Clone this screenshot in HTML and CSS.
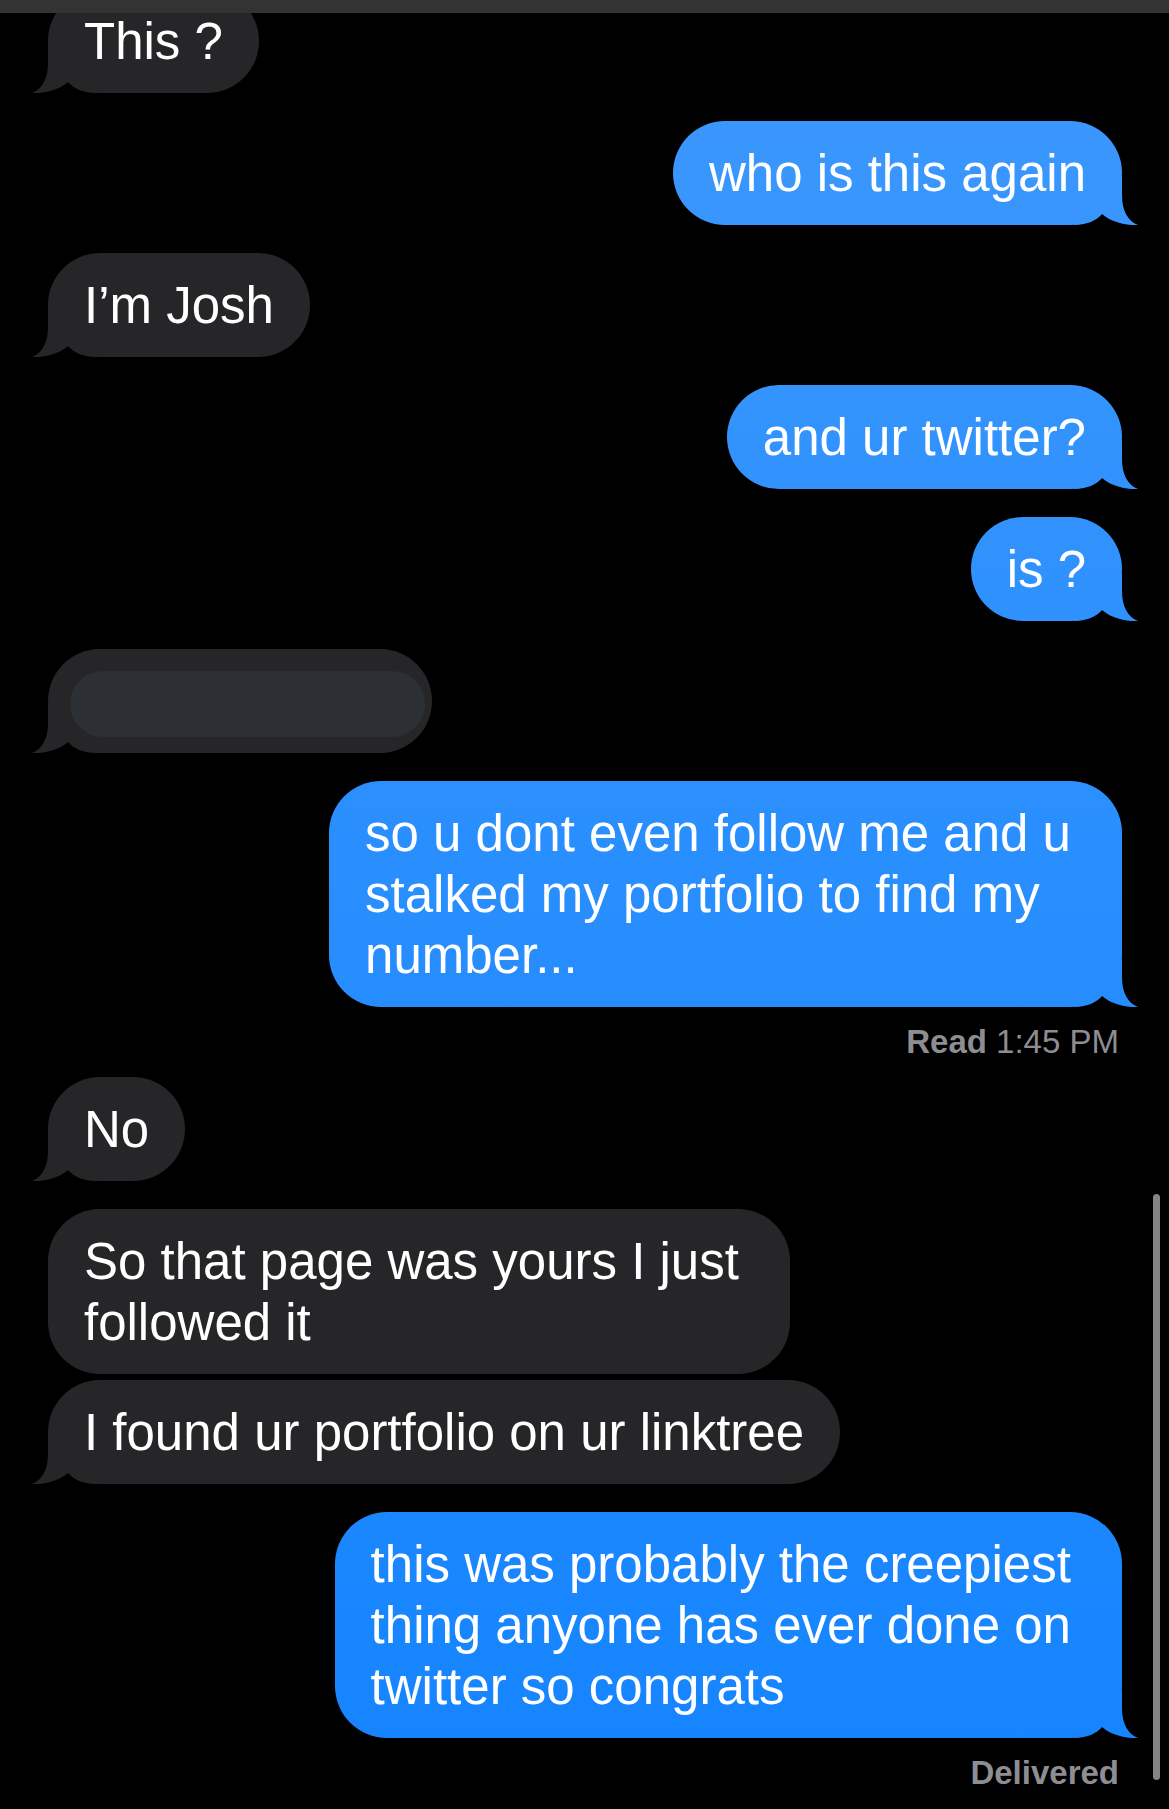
FILE: index.html
```html
<!DOCTYPE html>
<html lang="en">
<head>
    <meta charset="UTF-8">
    <meta name="viewport" content="width=device-width, initial-scale=1.0">
    <title>Messages</title>
    <link rel="stylesheet" href="styles.css">
</head>
<body>

    <!-- Nav bar edge, cut off at the top of the screenshot -->
    <div class="top-bar"></div>

    <!-- Conversation -->
    <main class="thread">
        <div class="bubble received tail first">This ?</div>
        <div class="bubble sent tail">who is this again</div>
        <div class="bubble received tail">I’m Josh</div>
        <div class="bubble sent tail">and ur twitter?</div>
        <div class="bubble sent tail">is ?</div>

        <!-- Redacted reply -->
        <div class="bubble received tail redacted">
            <div class="redaction"></div>
        </div>

        <div class="bubble sent tail multi">so u dont even follow me and u<br>stalked my portfolio to find my<br>number...</div>
        <p class="status"><b>Read</b> 1:45 PM</p>

        <div class="bubble received tail">No</div>
        <div class="bubble received multi">So that page was yours I just<br>followed it</div>
        <div class="bubble received tail cont">I found ur portfolio on ur linktree</div>

        <div class="bubble sent tail multi">this was probably the creepiest<br>thing anyone has ever done on<br>twitter so congrats</div>
        <p class="status"><b>Delivered</b></p>
    </main>

    <!-- Scroll indicator -->
    <div class="scroll-indicator"></div>

</body>
</html>
```

FILE: styles.css
```css
html, body {
    background-color: #000;
}

body {
    margin: 0;
    height: 1809px;
    overflow: hidden;
    position: relative;
    font-family: "Liberation Sans", Arial, sans-serif;
    -webkit-font-smoothing: antialiased;
}

.top-bar {
    position: absolute;
    top: 0;
    left: 0;
    right: 0;
    height: 13px;
    background-color: #333;
    z-index: 5;
}

.thread {
    display: flex;
    flex-direction: column;
    padding: 0 47px 0 48px;
}

/* Message bubbles */
.bubble {
    position: relative;
    z-index: 0;
    margin-top: 28px;
    padding: 22px 36px 21px;
    border-radius: 52px;
    font-size: 51px;
    line-height: 61px;
    color: #fff;
    white-space: nowrap;
}

/* wrapped messages keep a little slack on the right */
.bubble.multi {
    padding-right: 51px;
}

.bubble.first {
    margin-top: -11px;
}

.bubble.cont {
    margin-top: 6px;
}

.received {
    align-self: flex-start;
    background-color: #262628;
}

.sent {
    align-self: flex-end;
    background: linear-gradient(180deg, #3d98fd 0%, #1484ff 100%) fixed;
}

/* Tail drawn behind the text, same fill as the bubble */
.tail::after {
    content: "";
    position: absolute;
    bottom: 0;
    width: 64px;
    height: 48px;
    background: inherit;
    z-index: -1;
}

.sent.tail::after {
    right: -16px;
    clip-path: path("M0 0 H48 V18 C48 34 54 44 64 48 C54 48.6 38 46 28 37 C22 44 12 48 0 48 Z");
}

.received.tail::after {
    left: -16px;
    clip-path: path("M64 0 H16 V18 C16 34 10 44 0 48 C10 48.6 26 46 36 37 C42 44 52 48 64 48 Z");
}

/* Blurred-out reply */
.bubble.redacted {
    padding: 22px 7px 16px 22px;
}

.redaction {
    width: 355px;
    height: 66px;
    border-radius: 33px;
    background-color: #2c2f34;
}

/* Read / Delivered receipts */
.status {
    align-self: flex-end;
    margin: 15px 3px 0 0;
    font-size: 33px;
    line-height: 40px;
    color: #8d8d92;
}

.status b {
    font-weight: bold;
}

.status + .bubble {
    margin-top: 15px;
}

.scroll-indicator {
    position: absolute;
    left: 1153px;
    top: 1194px;
    width: 7px;
    height: 586px;
    border-radius: 4px;
    background-color: #858585;
}
```
